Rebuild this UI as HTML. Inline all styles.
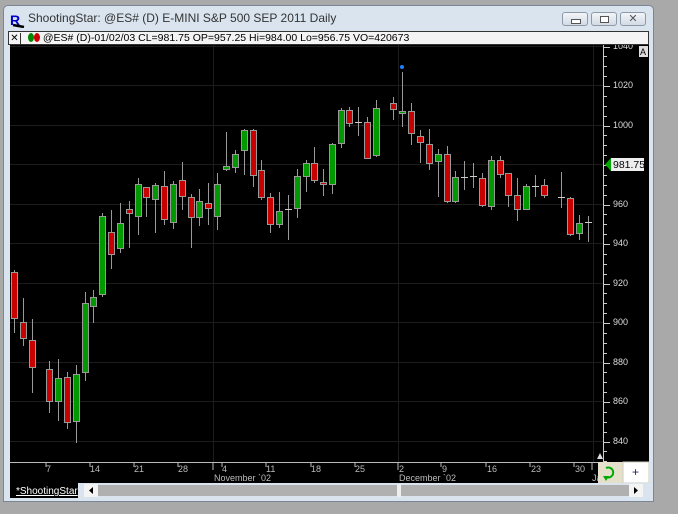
<!DOCTYPE html>
<html><head><style>
body{margin:0;width:678px;height:514px;background:#a9a9a9;position:relative;overflow:hidden;font-family:"Liberation Sans",sans-serif;}
.win{position:absolute;left:3px;top:5px;width:651px;height:497px;background:#d9e4ef;border:1px solid #7a8696;border-radius:5px 5px 0 0;box-sizing:border-box;}
.title{position:absolute;left:28px;top:11px;font-size:12px;color:#333;}
.btn{position:absolute;top:12px;width:26px;height:14px;border:1px solid #8d99a8;border-radius:3px;background:linear-gradient(#f2f5f9,#d3dbe5);box-sizing:border-box;}
.info{position:absolute;left:8px;top:31px;width:641px;height:14px;background:#f4f4f4;border:1px solid #333;box-sizing:border-box;font-size:10.5px;line-height:12px;color:#000;}
.chart{position:absolute;left:10px;top:45px;}
</style></head><body>
<div class="win"></div>
<svg style="position:absolute;left:10px;top:13px" width="15" height="15"><text x="0" y="12" font-family="Liberation Sans" font-weight="bold" font-size="14" fill="#0000cc">R</text><path d="M3 12 L14 14" stroke="#000" stroke-width="2.5"/></svg>
<div class="title">ShootingStar: @ES# (D) E-MINI S&amp;P 500 SEP 2011 Daily</div>
<div class="btn" style="left:562px"><div style="position:absolute;left:8px;top:6px;width:8px;height:3px;border:1px solid #555;background:#fff"></div></div>
<div class="btn" style="left:591px"><div style="position:absolute;left:8px;top:3px;width:7px;height:5px;border:1px solid #555;background:#fff"></div></div>
<div class="btn" style="left:620px;font-size:11px;text-align:center;line-height:12px;color:#555">✕</div>
<div class="info"><span style="display:inline-block;width:11px;border-right:1px solid #333;text-align:center;font-size:10px">✕</span>
<span style="display:inline-block;width:6px;height:9px;border-radius:50%;background:#080;margin-left:4px;vertical-align:-1px"></span><span style="display:inline-block;width:6px;height:9px;border-radius:50%;background:#c00;vertical-align:-1px"></span>
@ES# (D)-01/02/03 CL=981.75 OP=957.25 Hi=984.00 Lo=956.75 VO=420673</div>
<svg class="chart" width="639" height="453" viewBox="10 45 639 453" font-family="Liberation Sans" font-size="9">
<rect x="10" y="45" width="639" height="453" fill="#000"/>
<g stroke="#1c1c1c" stroke-width="1">
<line x1="10" x2="603" y1="46.5" y2="46.5"/><line x1="10" x2="603" y1="85.5" y2="85.5"/><line x1="10" x2="603" y1="125.5" y2="125.5"/><line x1="10" x2="603" y1="164.5" y2="164.5"/><line x1="10" x2="603" y1="204.5" y2="204.5"/><line x1="10" x2="603" y1="243.5" y2="243.5"/><line x1="10" x2="603" y1="283.5" y2="283.5"/><line x1="10" x2="603" y1="322.5" y2="322.5"/><line x1="10" x2="603" y1="362.5" y2="362.5"/><line x1="10" x2="603" y1="401.5" y2="401.5"/><line x1="10" x2="603" y1="441.5" y2="441.5"/>
<line x1="213.5" x2="213.5" y1="45" y2="462"/><line x1="398.5" x2="398.5" y1="45" y2="462"/><line x1="593.5" x2="593.5" y1="45" y2="462"/>
</g>
<g id="c" stroke="#999" stroke-width="1"></g>
<circle cx="402" cy="67" r="2" fill="#1e7fff"/>
<line x1="603.5" x2="603.5" y1="45" y2="462" stroke="#ccc"/>
<g stroke="#ccc" id="t"></g>
<g fill="#ddd"><text x="613" y="49">1040</text><text x="613" y="88">1020</text><text x="613" y="128">1000</text><text x="613" y="207">960</text><text x="613" y="246">940</text><text x="613" y="286">920</text><text x="613" y="325">900</text><text x="613" y="365">880</text><text x="613" y="404">860</text><text x="613" y="444">840</text></g>
<polygon points="605,164.5 611,158 611,171" fill="#0a0"/>
<rect x="611" y="158" width="33" height="13" fill="#eee"/><text x="613" y="168" font-size="10.5" fill="#000">981.75</text>
<rect x="639" y="46" width="9" height="11" fill="#ddd"/><text x="640" y="55" fill="#000">A</text>
<polygon points="597,459 603,459 600,453" fill="#ddd"/>
<rect x="10" y="462" width="639" height="36" fill="#000"/>
<line x1="10" x2="598" y1="462.5" y2="462.5" stroke="#bbb"/>
<g stroke="#bbb"><line x1="46" x2="46" y1="463" y2="467"/><line x1="90" x2="90" y1="463" y2="467"/><line x1="134" x2="134" y1="463" y2="467"/><line x1="178" x2="178" y1="463" y2="467"/><line x1="213" x2="213" y1="463" y2="470"/><line x1="222" x2="222" y1="463" y2="467"/><line x1="266" x2="266" y1="463" y2="467"/><line x1="311" x2="311" y1="463" y2="467"/><line x1="355" x2="355" y1="463" y2="467"/><line x1="398" x2="398" y1="463" y2="470"/><line x1="441" x2="441" y1="463" y2="467"/><line x1="486" x2="486" y1="463" y2="467"/><line x1="530" x2="530" y1="463" y2="467"/><line x1="574" x2="574" y1="463" y2="467"/><line x1="592" x2="592" y1="463" y2="470"/></g>
<g fill="#bbb"><text x="46" y="472">7</text><text x="90" y="472">14</text><text x="134" y="472">21</text><text x="178" y="472">28</text><text x="222" y="472">4</text><text x="266" y="472">11</text><text x="311" y="472">18</text><text x="355" y="472">25</text><text x="399" y="472">2</text><text x="442" y="472">9</text><text x="487" y="472">16</text><text x="531" y="472">23</text><text x="575" y="472">30</text><text x="214" y="481">November `02</text><text x="399" y="481">December `02</text><text x="592" y="481">Jan</text></g>
<rect x="598" y="462" width="25" height="21" fill="#e4e0cc"/>
<path d="M606 468 A5 5 0 1 1 606 477" stroke="#0a0" stroke-width="2" fill="none"/><polygon points="603,476 609,476 606,481" fill="#0a0"/>
<rect x="623" y="462" width="26" height="21" fill="#fff" stroke="#ccb"/><text x="632" y="476" font-size="12" fill="#226">+</text>
<rect x="78" y="483" width="571" height="15" fill="#d9e4ef"/>
<text x="16" y="494" fill="#fff" font-size="10" text-decoration="underline">*ShootingStar</text>
<rect x="84" y="484" width="14" height="13" fill="#f4f4f4"/><polygon points="93,487 93,494 89,490.5" fill="#000"/>
<rect x="98" y="485" width="531" height="11" fill="#b0b0b0"/>
<rect x="397" y="484" width="4" height="13" fill="#eee"/>
<rect x="629" y="484" width="14" height="13" fill="#f4f4f4"/><polygon points="634,487 634,494 638,490.5" fill="#000"/>
</svg>
<script>
var d=[[14.3,272,318,270,333,'r'],[22.7,322,338,298,346,'r'],[31.7,340,367,319,393,'r'],[49.3,369,401,361,413,'r'],[58.3,378,401,359,421,'g'],[67,377,422,372,429,'r'],[76,374,421,365,443,'g'],[84.7,303,372,292,381,'g'],[93.3,297,306,290,323,'g'],[102.3,216,294,213,297,'g'],[111.3,232,254,210,269,'r'],[120,223,248,203,253,'g'],[129,209,213,201,248,'r'],[137.7,184,216,178,235,'g'],[146.3,187,197,187,217,'r'],[155.3,185,199,183,233,'g'],[164.3,186,219,171,225,'r'],[173,184,222,181,229,'g'],[182,180,196,162,210,'r'],[190.7,197,217,194,248,'r'],[199.3,201,217,189,226,'g'],[208.3,203,208,183,225,'r'],[217,184,216,173,230,'g'],[226,166,169,132,171,'g'],[234.7,154,167,150,173,'g'],[243.7,130,150,129,175,'g'],[252.7,130,175,129,187,'r'],[261.3,170,197,160,200,'r'],[270,197,224,193,233,'r'],[279,211,224,192,228,'g'],[288,209,209,195,240,'d'],[296.7,176,208,169,218,'g'],[305.7,163,176,160,192,'g'],[314.3,163,180,147,183,'r'],[323.3,182,184,169,196,'r'],[332,144,184,143,194,'g'],[340.7,110,143,108,148,'g'],[349.3,110,123,107,127,'r'],[358.3,122,122,107,136,'d'],[367.3,122,158,117,159,'r'],[376,108,155,100,157,'g'],[393.3,103,109,97,120,'r'],[402.3,111,113,72,127,'g'],[411.3,111,133,103,145,'r'],[420,136,142,130,163,'r'],[429,144,163,129,170,'r'],[437.7,154,161,149,197,'g'],[446.7,154,201,146,203,'r'],[455.3,177,201,171,203,'g'],[464.3,177,177,161,190,'d'],[473.3,176,176,163,188,'d'],[482,178,205,173,207,'r'],[490.7,160,206,156,210,'g'],[499.7,160,174,156,178,'r'],[508.3,173,195,173,207,'r'],[517.3,195,209,178,221,'r'],[526.3,186,209,184,210,'g'],[535,186,186,175,197,'d'],[544,185,195,179,198,'r'],[561.3,197,197,172,208,'d'],[570,198,234,197,236,'r'],[579,223,233,215,240,'g'],[588.3,222,222,216,242,'d']];
var s='',ns='http://www.w3.org/2000/svg';
d.forEach(function(c){var x=Math.round(c[0]);s+='<line x1="'+(x+.5)+'" x2="'+(x+.5)+'" y1="'+c[3]+'" y2="'+c[4]+'"/>';
if(c[5]=='d'){s+='<line x1="'+(x-3)+'" x2="'+(x+4)+'" y1="'+(c[1]+.5)+'" y2="'+(c[1]+.5)+'" stroke="#ccc"/>';}
else{s+='<rect x="'+(x-2.5)+'" y="'+(c[1]+.5)+'" width="6" height="'+Math.max(2,c[2]-c[1])+'" fill="'+(c[5]=='r'?'#c80000':'#009a00')+'"/>';}});
document.getElementById('c').innerHTML=s;
var t='';for(var y=46.5;y<462;y+=9.875){var big=Math.abs(((y-46.5)/39.5)-Math.round((y-46.5)/39.5))<0.01;t+='<line x1="603" x2="'+(big?610:607)+'" y1="'+Math.round(y)+'.5" y2="'+Math.round(y)+'.5"/>';}
document.getElementById('t').innerHTML=t;
</script>
</body></html>
